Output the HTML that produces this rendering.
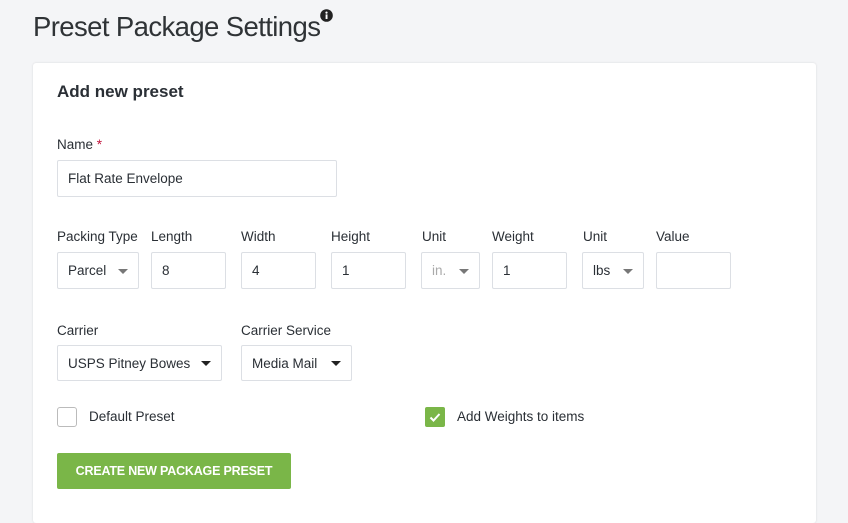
<!DOCTYPE html><html><head><style>
body{margin:0;width:848px;height:510px;background:#f4f5f7;font-family:"Liberation Sans",sans-serif;color:#2a2f35;position:relative;overflow:hidden}
.a{position:absolute}
.card{left:33px;top:63px;width:783px;height:460px;background:#fff;border-radius:3px;box-shadow:0 0 2px rgba(0,0,0,.12)}
.lbl{font-size:13.5px;color:#2a2f35}
.in{box-sizing:border-box;border:1px solid #dcdfe4;border-radius:2px;background:#fff;font-size:13.5px;padding-left:10px;display:flex;align-items:center}
.ar{position:absolute;right:10px;top:50%;margin-top:-2px;width:0;height:0;border-left:5px solid transparent;border-right:5px solid transparent;border-top:5px solid #777}
.ar.d{border-top-color:#222}
</style></head><body>
<div class="a" style="left:33px;top:11px;font-size:27.5px;font-weight:300;color:#2f3336;letter-spacing:-0.6px">Preset Package Settings</div>
<svg class="a" style="left:320px;top:9px" width="13" height="13" viewBox="0 0 13 13"><circle cx="6.5" cy="6.5" r="6.3" fill="#222"/><rect x="5.6" y="5.4" width="1.9" height="4.6" fill="#fff"/><circle cx="6.5" cy="3.6" r="1.1" fill="#fff"/></svg>
<div class="a card"></div>
<div class="a" style="left:57px;top:82px;font-size:17px;font-weight:bold">Add new preset</div>
<div class="a lbl" style="left:57px;top:137px">Name <span style="color:#c0143c">*</span></div>
<div class="a in" style="left:57px;top:160px;width:280px;height:37px">Flat Rate Envelope</div>

<div class="a lbl" style="left:57px;top:229px">Packing Type</div>
<div class="a lbl" style="left:151px;top:229px">Length</div>
<div class="a lbl" style="left:241px;top:229px">Width</div>
<div class="a lbl" style="left:331px;top:229px">Height</div>
<div class="a lbl" style="left:422px;top:229px">Unit</div>
<div class="a lbl" style="left:492px;top:229px">Weight</div>
<div class="a lbl" style="left:583px;top:229px">Unit</div>
<div class="a lbl" style="left:656px;top:229px">Value</div>

<div class="a in" style="left:57px;top:252px;width:82px;height:37px">Parcel<span class="ar"></span></div>
<div class="a in" style="left:151px;top:252px;width:75px;height:37px">8</div>
<div class="a in" style="left:241px;top:252px;width:75px;height:37px">4</div>
<div class="a in" style="left:331px;top:252px;width:75px;height:37px">1</div>
<div class="a in" style="left:421px;top:252px;width:59px;height:37px;color:#aaa">in.<span class="ar"></span></div>
<div class="a in" style="left:492px;top:252px;width:75px;height:37px">1</div>
<div class="a in" style="left:582px;top:252px;width:62px;height:37px">lbs<span class="ar"></span></div>
<div class="a in" style="left:656px;top:252px;width:75px;height:37px"></div>

<div class="a lbl" style="left:57px;top:323px">Carrier</div>
<div class="a lbl" style="left:241px;top:323px">Carrier Service</div>
<div class="a in" style="left:57px;top:345px;width:165px;height:36px">USPS Pitney Bowes<span class="ar d"></span></div>
<div class="a in" style="left:241px;top:345px;width:111px;height:36px">Media Mail<span class="ar d"></span></div>

<div class="a" style="left:57px;top:407px;width:20px;height:20px;box-sizing:border-box;border:1px solid #bbb;border-radius:3px"></div>
<div class="a lbl" style="left:89px;top:409px">Default Preset</div>
<div class="a" style="left:425px;top:407px;width:20px;height:20px;background:#7ab648;border-radius:2px"><svg width="20" height="20"><path d="M5.5 10.5l3 3 6-6.5" stroke="#fff" stroke-width="2" fill="none"/></svg></div>
<div class="a lbl" style="left:457px;top:409px">Add Weights to items</div>

<div class="a" style="left:57px;top:453px;width:234px;height:36px;background:#7ab648;border-radius:2px;color:#fff;font-size:12.5px;font-weight:bold;display:flex;align-items:center;justify-content:center;letter-spacing:-0.2px">CREATE NEW PACKAGE PRESET</div>
</body></html>
